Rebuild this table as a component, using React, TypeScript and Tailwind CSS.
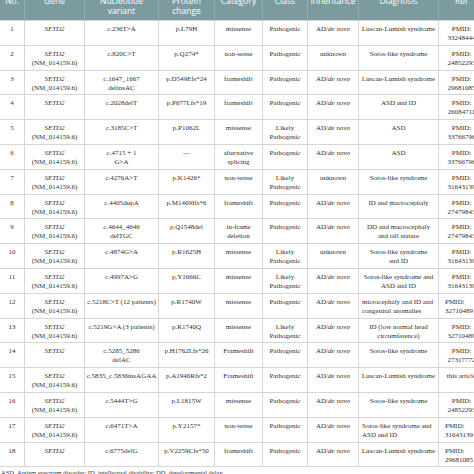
import React from "react";

type Cell = React.ReactNode;
type Row = {
  no: number;
  nm: boolean;
  nuc: Cell;
  prot: Cell;
  cat: Cell;
  cls: Cell;
  inh: "dn" | "unknown";
  diag: Cell;
  diagLeft?: boolean;
  ref: Cell;
  refLeft?: boolean;
};

const P = (a: string, b?: string) =>
  b ? (
    <>
      {a}
      <br />
      {b}
    </>
  ) : (
    a
  );

const rows: Row[] = [
  { no: 1, nm: false, nuc: "c.236T>A", prot: "p.L79H", cat: "missense", cls: "Pathogenic", inh: "dn", diag: "Luscan-Lumish syndrome", ref: P("PMID:", "33248444") },
  { no: 2, nm: true, nuc: "c.820C>T", prot: "p.Q274*", cat: "non-sense", cls: "Pathogenic", inh: "unknown", diag: "Sotos-like syndrome", ref: P("PMID:", "24852293") },
  { no: 3, nm: true, nuc: P("c.1647_1667", "delinsAC"), prot: "p.D549Efs*24", cat: "frameshift", cls: "Pathogenic", inh: "dn", diag: "Luscan-Lumish syndrome", ref: P("PMID:", "29681085") },
  { no: 4, nm: false, nuc: "c.2028delT", prot: "p.P677Lfs*19", cat: "frameshift", cls: "Pathogenic", inh: "dn", diag: "ASD and ID", ref: P("PMID:", "26084711") },
  { no: 5, nm: true, nuc: "c.3185C>T", prot: "p.P1062L", cat: "missense", cls: P("Likely", "Pathogenic"), inh: "dn", diag: "ASD", ref: P("PMID:", "33766796") },
  { no: 6, nm: true, nuc: P("c.4715 + 1", "G>A"), prot: "—", cat: P("alternative", "splicing"), cls: "Pathogenic", inh: "dn", diag: "ASD", ref: P("PMID:", "33766796") },
  { no: 7, nm: true, nuc: "c.4276A>T", prot: "p.K1426*", cat: "non-sense", cls: P("Likely", "Pathogenic"), inh: "unknown", diag: "Sotos-like syndrome", ref: P("PMID:", "31643139") },
  { no: 8, nm: true, nuc: "c.4405dupA", prot: "p.M1469Ifs*6", cat: "frameshift", cls: "Pathogenic", inh: "dn", diag: "ID and macrocephaly", ref: P("PMID:", "27479843") },
  { no: 9, nm: true, nuc: P("c.4644_4646", "delTGC"), prot: "p.Q1548del", cat: P("in-frame", "deletion"), cls: "Pathogenic", inh: "dn", diag: P("DD and macrocephaly", "and tall stature"), ref: P("PMID:", "27479843") },
  { no: 10, nm: true, nuc: "c.4874G>A", prot: "p.R1625H", cat: "missense", cls: P("Likely", "Pathogenic"), inh: "unknown", diag: P("Sotos-like syndrome", "and ID"), ref: P("PMID:", "31643139") },
  { no: 11, nm: true, nuc: "c.4997A>G", prot: "p.Y1666C", cat: "missense", cls: P("Likely", "Pathogenic"), inh: "dn", diag: P("Sotos-like syndrome and", "ASD and ID"), ref: P("PMID:", "31643139") },
  { no: 12, nm: true, nuc: "c.5218C>T (12 patients)", prot: "p.R1740W", cat: "missense", cls: "Pathogenic", inh: "dn", diag: P("microcephaly and ID and", "congenital anomalies"), diagLeft: true, ref: P("PMID:", "32710489"), refLeft: true },
  { no: 13, nm: true, nuc: "c.5219G>A (3 patients)", prot: "p.R1740Q", cat: "missense", cls: P("Likely", "Pathogenic"), inh: "dn", diag: P("ID (low normal head", "circumference)"), ref: P("PMID:", "32710489") },
  { no: 14, nm: false, nuc: P("c.5285_5286", "delAC"), prot: "p.H1762Lfs*26", cat: "Frameshift", cls: "Pathogenic", inh: "dn", diag: "Sotos-like syndrome", ref: P("PMID:", "27317772") },
  { no: 15, nm: true, nuc: "c.5835_c.5836insAGAA", prot: "p.A1946Rfs*2", cat: "Frameshift", cls: "Pathogenic", inh: "dn", diag: "Luscan-Lumish syndrome", ref: "this article" },
  { no: 16, nm: true, nuc: "c.5444T>G", prot: "p.L1815W", cat: "missense", cls: "Pathogenic", inh: "dn", diag: "Sotos-like syndrome", ref: P("PMID:", "24852293") },
  { no: 17, nm: true, nuc: "c.6471T>A", prot: "p.Y2157*", cat: "non-sense", cls: "Pathogenic", inh: "dn", diag: P("Sotos-like syndrome and", "ASD and ID"), diagLeft: true, ref: P("PMID:", "31643139"), refLeft: true },
  { no: 18, nm: false, nuc: "c.6775delG", prot: "p.V2259Cfs*50", cat: "frameshift", cls: "Pathogenic", inh: "dn", diag: "Luscan-Lumish syndrome", ref: P("PMID:", "29681085"), refLeft: true },
];

const headers: Cell[] = [
  "No.",
  "Gene",
  P("Nucleotide", "variant"),
  P("Protein", "change"),
  "Category",
  "Class",
  "Inheritance",
  "Diagnosis",
  "Ref",
];

const widths = [25, 60, 74, 56, 48, 45, 51, 80, 46];

const td =
  "border border-[#d6d6d6] align-top text-center px-[1px] pt-[4px] pb-0 h-[24.8px] leading-[9px] text-[7px] text-[#2f2f2f] whitespace-nowrap";

export default function App() {
  return (
    <div
      className="w-[474px] h-[474px] overflow-hidden bg-white"
      style={{ fontFamily: '"Liberation Serif", "Times New Roman", serif' }}
    >
      <table className="table-fixed border-collapse w-[485px] -mt-[8px] -ml-[1px]">
        <colgroup>
          {widths.map((w, i) => (
            <col key={i} style={{ width: w }} />
          ))}
        </colgroup>
        <thead>
          <tr className="bg-[#7b9b9f]">
            {headers.map((h, i) => (
              <th
                key={i}
                className="border-x border-[#93aeb1] align-top text-center font-normal text-white text-[8.5px] leading-[10px] pt-[4px] pb-[4px] h-[28px] px-[2px]"
                style={{ fontFamily: '"Open Sans", "Liberation Sans", sans-serif' }}
              >
                {h}
              </th>
            ))}
          </tr>
        </thead>
        <tbody>
          {rows.map((r) => (
            <tr key={r.no}>
              <td className={td}>{r.no}</td>
              <td className={td}>
                <i>SETD2</i>
                {r.nm && (
                  <>
                    <br />
                    (NM_014159.6)
                  </>
                )}
              </td>
              <td className={td}>{r.nuc}</td>
              <td className={td}>{r.prot}</td>
              <td className={td}>{r.cat}</td>
              <td className={td}>{r.cls}</td>
              <td className={td}>
                {r.inh === "dn" ? (
                  <>
                    AD/<i>de novo</i>
                  </>
                ) : (
                  "unknown"
                )}
              </td>
              <td className={`${td} ${r.diagLeft ? "!text-left !pl-[3px]" : ""}`}>{r.diag}</td>
              <td className={`${td} ${r.refLeft ? "!text-left !pl-[6px]" : ""}`}>{r.ref}</td>
            </tr>
          ))}
        </tbody>
      </table>
      <div className="text-[6.5px] leading-[9px] text-[#2f2f2f] pt-[1px] pl-[1px] whitespace-nowrap">
        ASD, Autism spectrum disorder; ID, intellectual disability; DD, developmental delay.
      </div>
    </div>
  );
}
